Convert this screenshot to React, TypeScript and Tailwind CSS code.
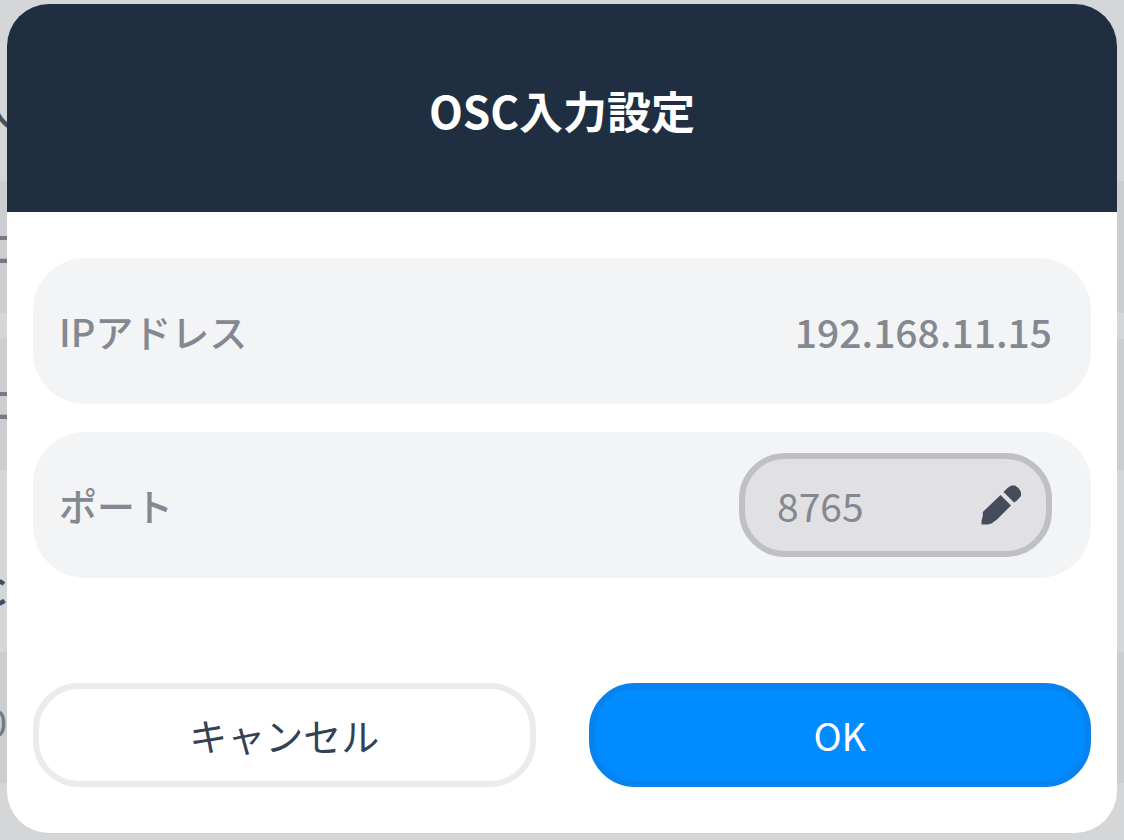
import React, { useState } from 'react';

const BACKDROP_ROWS = [
  { id: 'title', text: '入', row: 'h-[181px] pt-[88px] bg-[#d5d6d8]', label: '-ml-[27px] text-[40px] font-medium text-[#454f5e]' },
  { id: 'input', text: 'コ', row: 'h-[132px] pt-[46px] bg-[#cccdcf]', label: '-ml-[20px] text-[40px] font-medium text-[#747a84]' },
  { id: 'gap', text: '', row: 'h-[26px] bg-[#d5d6d8]', label: '' },
  { id: 'output', text: 'コ', row: 'h-[131px] pt-[44px] bg-[#cccdcf]', label: '-ml-[20px] text-[40px] font-medium text-[#747a84]' },
  { id: 'section', text: 'C', row: 'h-[182px] pt-[100px] bg-[#d5d6d8]', label: '-ml-[17px] text-[36px] font-bold text-[#454f5e]' },
  { id: 'value', text: '0', row: 'h-[131px] pt-[49px] bg-[#cccdcf]', label: '-ml-[14px] text-[38px] text-[#747a84]' },
];

function Backdrop() {
  return (
    <div aria-hidden="true" className="absolute inset-0 overflow-hidden bg-[#d5d6d8]">
      {BACKDROP_ROWS.map((item) => (
        <div key={item.id} className={item.row}>
          <span className={`block leading-[40px] ${item.label}`}>{item.text}</span>
        </div>
      ))}
    </div>
  );
}

function PencilIcon() {
  return (
    <svg viewBox="0 0 40 40" className="size-10 shrink-0 fill-[#454d5c]" aria-hidden="true">
      <path d="M0.500 39.500V35.500L1.800 31V27L19.500 10L30 20.500L16 34.500L10.500 38.500L7 39.500Z" />
      <path d="M22.500 7L27 2.500L30.500 0.500H34L37.500 3L40 7V11L36 15.500L33 17.500Z" />
    </svg>
  );
}

export default function App() {
  const [port, setPort] = useState('8765');

  return (
    <main className="relative min-h-screen px-[7px] pt-1 pb-[7px] font-['Noto_Sans_CJK_JP',sans-serif]">
      <Backdrop />

      <form
        role="dialog"
        aria-labelledby="dialog-title"
        className="relative overflow-hidden rounded-[42px] bg-white"
        onSubmit={(e) => e.preventDefault()}
      >
        <header className="flex h-52 items-center justify-center bg-[#202e41] pt-1">
          <h1 id="dialog-title" className="text-[44px] leading-[60px] font-bold text-white">
            OSC入力設定
          </h1>
        </header>

        <div className="px-[26px] pt-[46px] pb-[46px]">
          {/* Settings rows */}
          <div className="flex flex-col gap-7 text-[39px] leading-[56px] text-[#848991]">
            <div className="flex h-[146px] items-center justify-between rounded-[52px] bg-[#f3f4f6] pr-[39px] pl-[26px] font-medium">
              <span className="text-[38px]">IPアドレス</span>
              <span>192.168.11.15</span>
            </div>

            <div className="flex h-[146px] items-center justify-between rounded-[52px] bg-[#f3f4f6] pr-[39px] pl-[26px]">
              <label htmlFor="port" className="text-[38px] font-medium">ポート</label>
              <div className="flex h-[104px] w-[313px] items-center rounded-[46px] border-[6px] border-[#bfc0c2] bg-[#e1e1e3] pr-[25px] pl-8">
                <input
                  id="port"
                  type="text"
                  inputMode="numeric"
                  value={port}
                  onChange={(e) => setPort(e.target.value)}
                  className="h-14 w-full min-w-0 flex-1 bg-transparent outline-none"
                />
                <PencilIcon />
              </div>
            </div>
          </div>

          {/* Actions */}
          <div className="mt-[105px] grid grid-cols-2 gap-[53px] text-[38px] leading-[56px]">
            <button type="button" className="h-[104px] rounded-[46px] border-[6px] border-[#ebebeb] bg-white text-[#344054]">
              キャンセル
            </button>
            <button type="submit" className="h-[104px] rounded-[46px] border-[6px] border-[#0883ee] bg-[#008cff] text-white">
              OK
            </button>
          </div>
        </div>
      </form>
    </main>
  );
}
